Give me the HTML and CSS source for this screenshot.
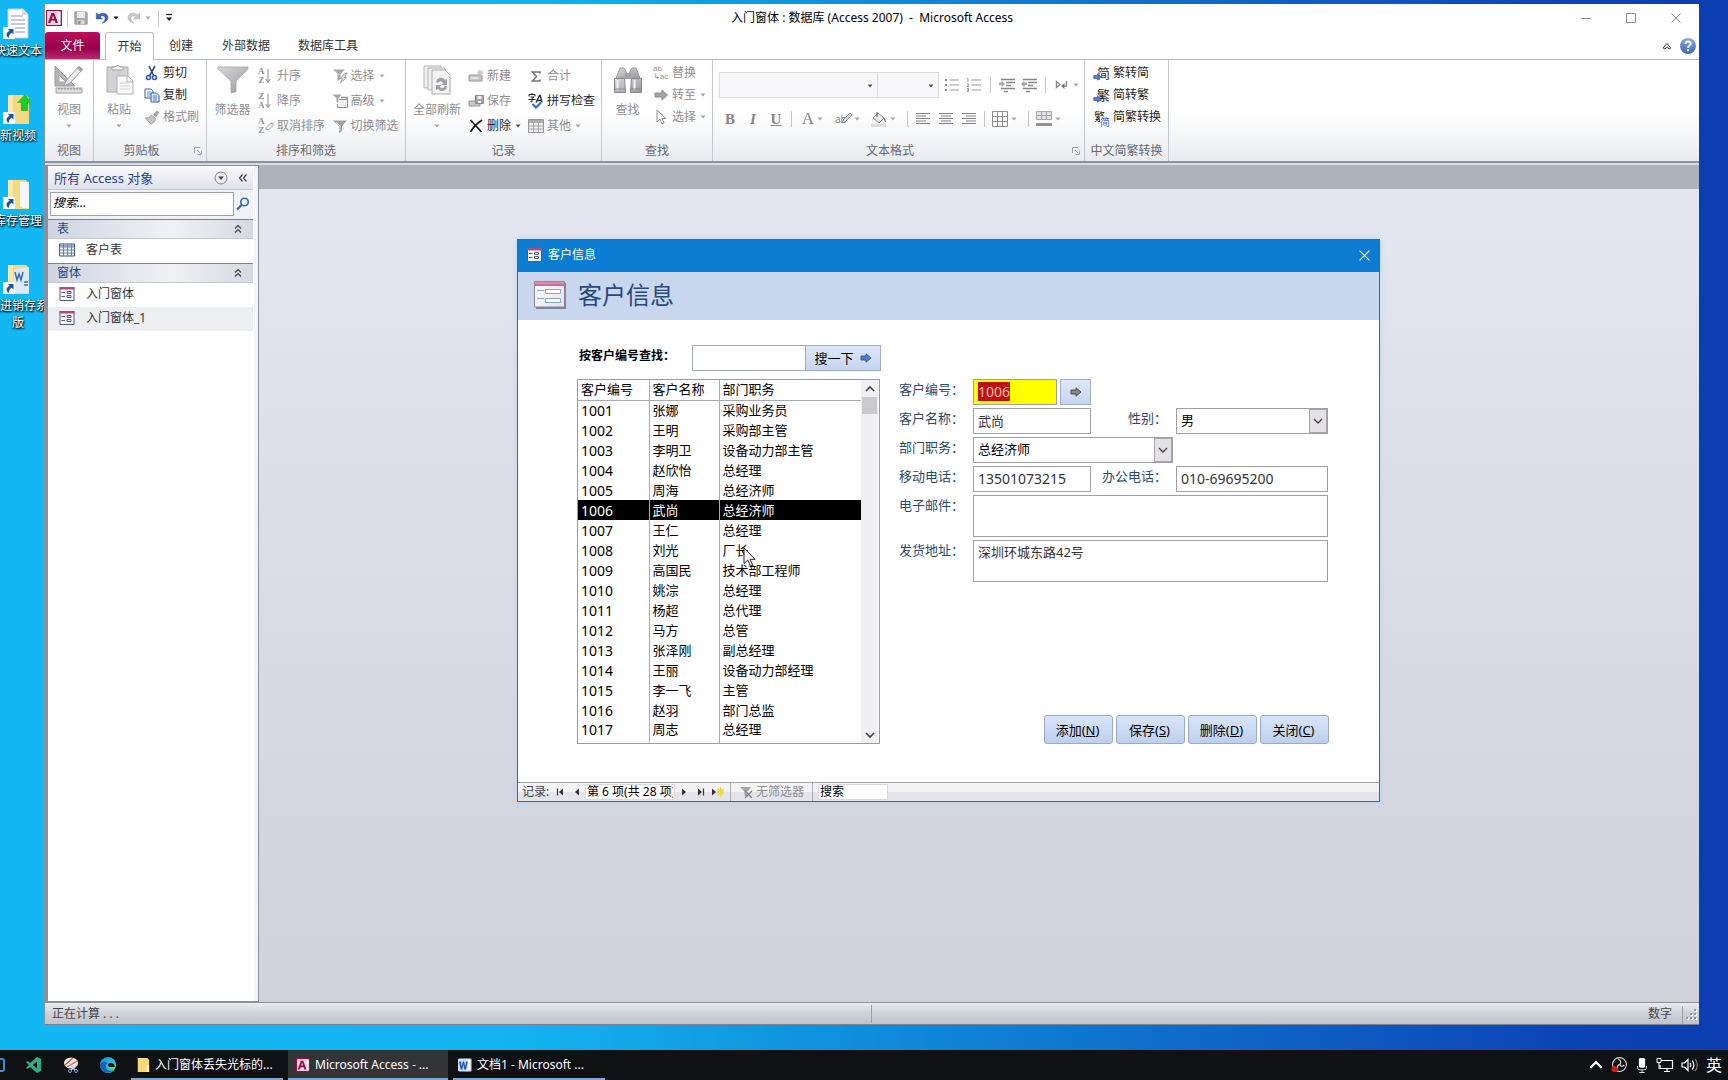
FILE: index.html
```html
<!DOCTYPE html>
<html lang="zh-CN">
<head>
<meta charset="utf-8">
<title>入门窗体 : 数据库 (Access 2007) - Microsoft Access</title>
<link rel="stylesheet" href="styles.css">
</head>
<body>
<svg class="sprite" aria-hidden="true">
  <defs>
    <linearGradient id="gGrey" x1="0" y1="0" x2="1" y2="1"><stop offset="0" stop-color="#d9d9dc"/><stop offset="1" stop-color="#98989c"/></linearGradient>
    <linearGradient id="gPaper" x1="0" y1="0" x2="1" y2="1"><stop offset="0" stop-color="#fff"/><stop offset="1" stop-color="#dfe2ee"/></linearGradient>
    <linearGradient id="gPink" x1="0" y1="0" x2="0" y2="1"><stop offset="0" stop-color="#e59abb"/><stop offset="1" stop-color="#c2638f"/></linearGradient>
    <linearGradient id="gHelp" x1="0" y1="0" x2="0" y2="1"><stop offset="0" stop-color="#86a8dc"/><stop offset="1" stop-color="#3c69b3"/></linearGradient>
    <linearGradient id="gEdge" x1="0" y1="0" x2="1" y2="1"><stop offset="0" stop-color="#1a7fd4"/><stop offset=".5" stop-color="#2bb8dd"/><stop offset="1" stop-color="#6fdd6a"/></linearGradient>
  </defs>
  <symbol id="access" viewBox="0 0 16 16"><path d="M.7.700h14.600v14.600H.7z" fill="#fff" stroke="#8e1049" stroke-width="1.300"/><path d="M1.300 1.300h11v13.400h-11z" fill="#f9cfe0"/><path d="M2 13 5.500 3h2.700L12 13H9.600l-.8-2.400H5.200L4.400 13zM5.900 8.700h2.300L7 5.200z" fill="#8e1049"/></symbol>
  <symbol id="disk" viewBox="0 0 16 16"><path d="M1 1h13l1 1v13H1z" fill="#a9a9ad" stroke="#929296"/><path d="M3.500 1h9v7h-9z" fill="#ececef"/><path d="M4 10.500h8V15H4z" fill="#dadadd"/><path d="M5 11.500h2.500V15H5z" fill="#88888c"/></symbol>
  <symbol id="undo" viewBox="0 0 16 16"><path d="M1.500 2v7h7L5.800 6.700C8 4.700 11.500 5 11.500 8.500c0 2-1 3.500-3.500 5.500 4.500-1.200 6.800-3.500 6.800-6.500C14.800 2.500 8.500 1 4 4.500z" fill="#3b62c4" stroke="#2b4c9c" stroke-width=".6"/></symbol>
  <symbol id="redo" viewBox="0 0 16 16"><path d="M14.500 2v7h-7l2.700-2.300C8 4.700 4.500 5 4.500 8.500c0 2 1 3.500 3.500 5.500C3.500 12.800 1.200 10.500 1.200 7.500 1.200 2.500 7.500 1 12 4.500z" fill="#c8c8cb" stroke="#a9a9ad" stroke-width=".6"/></symbol>
  <symbol id="down" viewBox="0 0 8 8"><path d="M1.500 2.500h5L4 5.500z" fill="currentColor"/></symbol>
  <symbol id="custom" viewBox="0 0 8 10"><path d="M1 1.500h6" stroke="#222" stroke-width="1.300"/><path d="M1 4.500h6.200L4.100 8z" fill="#222"/></symbol>
  <symbol id="view" viewBox="0 0 32 32"><path d="M2 2v20h20z" fill="#b6b6ba" stroke="#98989c"/><path d="M6 11v7h7z" fill="#fafafa" stroke="#a4a4a8"/><path d="M13 17 25 3l4 3-12 13-6 3z" fill="#ececef" stroke="#a1a1a5"/><path d="m24 4 2-2 4 3-2 3z" fill="#a2a2a6"/><path d="M3 24h26v5H3z" fill="#dededf" stroke="#a2a2a6"/><path d="M6 24v2m3-2v2m3-2v2m3-2v2m3-2v2m3-2v2m3-2v2m3-2v2" stroke="#909094"/></symbol>
  <symbol id="paste" viewBox="0 0 32 32"><path d="M4 3h21v25H4z" fill="#d2d2d5" stroke="#aaaaad"/><path d="M9 6V3h3a3 3 0 0 1 5 0h3v3z" fill="#f5f5f6" stroke="#a1a1a5"/><path d="M14 12h11l5 5v13H14z" fill="#fafafb" stroke="#b2b2b6"/><path d="M24 12v6h6" fill="none" stroke="#b2b2b6"/><path d="M17 19h9m-9 3h10m-10 3h10" stroke="#d0d0d4"/></symbol>
  <symbol id="cut" viewBox="0 0 16 16"><path d="m5 1 5 10M11 1 5.500 11" stroke="#3c4b6b" stroke-width="1.600"/><circle cx="4.500" cy="12.500" r="2" fill="none" stroke="#2f5ab0" stroke-width="1.600"/><circle cx="10.500" cy="12.500" r="2" fill="none" stroke="#2f5ab0" stroke-width="1.600"/></symbol>
  <symbol id="copy" viewBox="0 0 16 16"><path d="M1 2h6l2 2v7H1z" fill="#fff" stroke="#3a62a8"/><path d="M3 5h4M3 7h4M3 9h3" stroke="#5c8bd0"/><path d="M7 6h5.500L15 8.500V15H7z" fill="#dfeafb" stroke="#3158a3"/><path d="M9 9h4M9 11h4M9 13h4" stroke="#4b7bc8"/></symbol>
  <symbol id="brush" viewBox="0 0 16 16"><path d="m9 6 4-4.500 2.300 1.800L12 8z" fill="#a0a0a4"/><path d="M1 9c3 .5 5-1 6-3l5 3.500c-1 3-3 5-5 5.500z" fill="#c3c3c6" stroke="#9a9a9e" stroke-width=".7"/></symbol>
  <symbol id="funnel" viewBox="0 0 32 32"><path d="M1 3h30v2L19 17v10.500l-5 1.500V17L1 5z" fill="url(#gGrey)" stroke="#a4a4a8" stroke-width=".8"/></symbol>
  <symbol id="funnelS" viewBox="0 0 16 16"><path d="M1 2.500h14L10 8v5l-3 2V8z" fill="#a0a0a4"/><path d="m4 4 4 4v5" stroke="#e2e2e4" fill="none"/></symbol>
  <symbol id="funnelB" viewBox="0 0 16 16"><path d="M1 1.500h12L8.500 6v5L5.500 13V6z" fill="#a4a4a8"/><path d="m3.500 3 4 4" stroke="#e2e2e4" fill="none"/><path d="m12 6 3-1-2.500 4.500h2L8.500 15l2-4.500h-2z" fill="#e0e0e3" stroke="#929296" stroke-width=".8"/></symbol>
  <symbol id="funnelA" viewBox="0 0 16 16"><path d="M.500 1.500h9L6.500 5v5l-2-1V5z" fill="#a4a4a8"/><path d="M7 6.500h8.500v8H5.500V11" fill="#f1f1f3" stroke="#929296"/><path d="M9 4.500h6.500v2" fill="none" stroke="#929296" stroke-width="1.500"/></symbol>
  <symbol id="sortbar" viewBox="0 0 6 16"><path d="M3 1v13M.8 11 3 14.500 5.200 11" stroke="#8b8b8f" fill="none"/></symbol>
  <symbol id="eraser" viewBox="0 0 10 10"><path d="m1 7 5-5h3v2.500L4.500 9H1z" fill="#f0f0f1" stroke="#98989c"/></symbol>
  <symbol id="refresh" viewBox="0 0 32 32"><path d="M3 2h17v22H3z" fill="#f1f1f2" stroke="#b4b4b8"/><path d="M7 4h17v22H7z" fill="#f1f1f2" stroke="#b4b4b8"/><path d="M11 6h13l5 5v19H11z" fill="#f3f3f4" stroke="#a9a9ad"/><path d="M15 18a5 5 0 0 1 9-2l2-1v6h-6l2-2c-1-2-4-2-5 0zM26 22a5 5 0 0 1-9 3l-2 1v-5h5l-1 2c2 2 4 1 5-1z" fill="#a2a2a6"/></symbol>
  <symbol id="rec" viewBox="0 0 16 16"><path d="M1 7h13v6H1z" fill="#c6c6c9" stroke="#98989c"/><path d="M3 10h7" stroke="#fff"/><path d="m12 1 .8 2 2.200-.8L14.200 4l1.500 1.200-2 .5L13.500 8 12 6.500 10.300 8V5.700L8.500 5l1.800-1L9.500 2l2 .8z" fill="#c9c9cc"/></symbol>
  <symbol id="recsave" viewBox="0 0 16 16"><path d="M1 8h11v5H1z" fill="#c6c6c9" stroke="#98989c"/><path d="M7.500 2.500h8v8h-8z" fill="#a5a5a9" stroke="#8b8b8f"/><path d="M9.500 3h4v3h-4zM10 8h3v2h-3z" fill="#eee"/></symbol>
  <symbol id="cross" viewBox="0 0 16 16"><path d="m2.500 2 11 12M14 2C9 5.500 5 9.500 2.500 14" stroke="#1c1c1c" stroke-width="1.800" fill="none"/></symbol>
  <symbol id="sigma" viewBox="0 0 16 16"><path d="M12 5.500V4H4.500l4 4.500-4 4.500H12v-1.500" fill="none" stroke="#77777b" stroke-width="1.600"/></symbol>
  <symbol id="spell" viewBox="0 0 16 16"><path d="M4 0v1.500M1 3.500v-2h6v2M2.500 4h3.500L4 5.500M.500 6.500h7M4 5.500V9l-1.500-.5" fill="none" stroke="#222"/><path d="m8 9.500 3.500-7h.7L14 9.500M9.500 7.500h4" fill="none" stroke="#222" stroke-width="1.300"/><path d="m4.500 11 3.500 3.500 5-5" fill="none" stroke="#3d6fd0" stroke-width="2.300"/></symbol>
  <symbol id="sheet" viewBox="0 0 16 16"><path d="M.5 1.500h15v13H.5z" fill="#efeff0" stroke="#949498"/><path d="M1 2h14v3H1z" fill="#acacb0"/><path d="M.5 8h15m-15 3h15M5.500 5v9.500m5-9.500v9.500" stroke="#a2a2a6"/></symbol>
  <symbol id="find" viewBox="0 0 32 32"><path d="M8 4h4l2 3 1 7H4zM20 4h4l4 10H17l1-7z" fill="url(#gGrey)" stroke="#9b9b9f"/><path d="M13 9h6v6h-6z" fill="#a2a2a6"/><path d="M2.500 14.500h10l1 14h-11zM19.500 14.500h10v14h-11z" fill="url(#gGrey)" stroke="#8b8b8f"/><path d="M5.500 16v10M22.500 16v10" stroke="#f4f4f5" stroke-width="2"/><path d="M2 25h12M18 25h12" stroke="#8b8b8f"/></symbol>
  <symbol id="goto" viewBox="0 0 16 16"><path d="M2 6h7V3l5.500 5L9 13v-3H2z" fill="#a4a4a8" stroke="#8b8b8f"/></symbol>
  <symbol id="ptr" viewBox="0 0 16 16"><path d="M4 1v12l3-3 2 5 2-1-2-4.500h4z" fill="#fafafa" stroke="#909094"/></symbol>
  <symbol id="bullets" viewBox="0 0 16 16"><path d="M5.500 3H15M5.500 8H15m-9.500 5H15" stroke="#98989c" stroke-width="1.200"/><path d="M1 2h2v2H1zm0 5h2v2H1zm0 5h2v2H1z" fill="#8b8b8f"/></symbol>
  <symbol id="numbers" viewBox="0 0 16 16"><path d="M5.500 3H15M5.500 8H15m-9.500 5H15" stroke="#98989c" stroke-width="1.200"/><path d="M1 1.500h1V5M1 7h1.500v1L1 9.500h2M1 11.500h1.500v3H1m0-1.500h1.500" stroke="#8b8b8f" fill="none" stroke-width=".9"/></symbol>
  <symbol id="indent" viewBox="0 0 16 16"><path d="M2 2.500h14M7 5.500h9M7 8.500h5M2 11.500h14M5 14.500h4" stroke="#86868a" stroke-width="1.500"/><path d="M0 5.500h2.500v-2L6 7 2.500 10V8H0z" fill="#a6a6aa"/></symbol>
  <symbol id="outdent" viewBox="0 0 16 16"><path d="M2 2.500h14M7 5.500h9M7 8.500h5M2 11.500h14M5 14.500h4" stroke="#86868a" stroke-width="1.500"/><path d="M6 5.500H3.500v-2L0 7l3.500 3.500V8H6z" fill="#a6a6aa"/></symbol>
  <symbol id="rtl" viewBox="0 0 16 16"><path d="M2.500 4.500v6l3.500-3zM12.500 4v5H9" fill="none" stroke="#8b8b8f" stroke-width="1.400"/><path d="m7 9 3.500-3v6z" fill="#77777b"/></symbol>
  <symbol id="marker" viewBox="0 0 12 16"><path d="m2 9 7-7 2 2-7 7-3 1z" fill="#d5d5d8" stroke="#909094"/></symbol>
  <symbol id="bucket" viewBox="0 0 16 16"><path d="m2 7 5-5 6 5-5 5z" fill="#ececee" stroke="#909094"/><path d="M6 1v5m7 1 1.500 4" stroke="#808084" fill="none" stroke-width="1.400"/><path d="M0 12.500h15V16H0z" fill="#dededf"/></symbol>
  <symbol id="aleft" viewBox="0 0 16 16"><path d="M1 2.500h14M1 5h10M1 7.500h14M1 10h10M1 12.500h14" stroke="#808084"/></symbol>
  <symbol id="acenter" viewBox="0 0 16 16"><path d="M1 2.500h14M3 5h10M1 7.500h14M3 10h10M1 12.500h14" stroke="#808084"/></symbol>
  <symbol id="aright" viewBox="0 0 16 16"><path d="M1 2.500h14M5 5h10M1 7.500h14M5 10h10M1 12.500h14" stroke="#808084"/></symbol>
  <symbol id="grid" viewBox="0 0 16 16"><path d="M.5.500h15v15H.5zM5.500.500v15m5-15v15M.5 5.500h15m-15 5h15" fill="#fff" stroke="#8b8b8f"/></symbol>
  <symbol id="altrow" viewBox="0 0 16 16"><path d="M.5.500h15v8H.5zM5.500.500v8m5-8v8M.5 4.500h15" fill="#e2e2e4" stroke="#a6a6aa"/><path d="M0 12h16v3H0z" fill="#939397"/></symbol>
  <symbol id="bluearrow" viewBox="0 0 12 10"><path d="M1 3h5V.8L11 5 6 9.200V7H1z" fill="#4e7fdc" stroke="#28478d" stroke-width=".8"/></symbol>
  <symbol id="greyarrow" viewBox="0 0 12 10"><path d="M1 3h5V.8L11 5 6 9.200V7H1z" fill="#86888f" stroke="#404248" stroke-width=".9"/></symbol>
  <symbol id="launcher" viewBox="0 0 8 8"><path d="M.5 6V.500H6M3 3l3.500 3.500M7.500 3.500v4h-4" fill="none" stroke="#a6a6aa"/></symbol>
  <symbol id="table" viewBox="0 0 16 13"><path d="M.5.500h15v12H.5z" fill="#f2f6fd" stroke="#3d5780"/><path d="M1 1h14v2H1z" fill="#8fa6ca"/><path d="M0 3.500h16M0 6.500h16M0 9.500h16M4.500 0v13m4-13v13m4-13v13" stroke="#6983ad"/></symbol>
  <symbol id="form" viewBox="0 0 15 14"><path d="M.5.500h14v13H.5z" fill="#f6f7fd" stroke="#545488"/><path d="M0 0h15v2.500H0z" fill="#b54a72"/><path d="M2 5.500h3.500M2 9.500h3.500" stroke="#545488"/><path d="M7.500 4.500h4v2h-4zm0 4h4v2h-4z" fill="#fff" stroke="#545488"/></symbol>
  <symbol id="formbig" viewBox="0 0 32 28"><path d="M2 2h30v26H2z" fill="#7a8798"/><path d="M.5.500h30v25.500H.5z" fill="url(#gPaper)" stroke="#8f8398"/><path d="M1 1h29v4H1z" fill="url(#gPink)"/><path d="M3 9.500h7M3 17.500h7" stroke="#8da5c4"/><path d="M11.500 8.500h15v4h-15zm0 9h15v4h-15z" fill="#fff" stroke="#8da5c4"/></symbol>
  <symbol id="lens" viewBox="0 0 14 14"><circle cx="8.500" cy="5" r="3.800" fill="#e9f3ff" stroke="#3968a8" stroke-width="1.600"/><path d="M5.500 8 1.200 12.500" stroke="#3968a8" stroke-width="2.200"/></symbol>
  <symbol id="circledown" viewBox="0 0 14 14"><circle cx="7" cy="7" r="6" fill="#eceef2" stroke="#82868e"/><path d="M4 5.500h6L7 9z" fill="#44484f"/></symbol>
  <symbol id="dblleft" viewBox="0 0 10 10"><path d="M4.500 1.500 1.500 5l3 3.500M8.500 1.500 5.500 5l3 3.500" fill="none" stroke="#3c4048" stroke-width="1.200"/></symbol>
  <symbol id="dblup" viewBox="0 0 10 10"><path d="M2 4.500 5 1.500l3 3M2 8.500l3-3 3 3" fill="none" stroke="#3c4048" stroke-width="1.200"/></symbol>
  <symbol id="chevup" viewBox="0 0 10 8"><path d="M1.200 6 5 1.500 8.800 6 7 7 5 4.800 3 7z" fill="#fff" stroke="#333" stroke-width="1"/></symbol>
  <symbol id="min" viewBox="0 0 10 10"><path d="M0 5.500h10" stroke="#8a8a8a"/></symbol>
  <symbol id="max" viewBox="0 0 10 10"><path d="M.5.500h9v9h-9z" fill="none" stroke="#8a8a8a"/></symbol>
  <symbol id="x" viewBox="0 0 10 10"><path d="m.5.500 9 9m0-9-9 9" stroke="currentColor"/></symbol>
  <symbol id="chevD" viewBox="0 0 10 8"><path d="M1 2l4 4 4-4" fill="none" stroke="currentColor" stroke-width="1.300"/></symbol>
  <symbol id="chevU" viewBox="0 0 10 8"><path d="M1 6l4-4 4 4" fill="none" stroke="currentColor" stroke-width="1.600"/></symbol>
  <symbol id="first" viewBox="0 0 8 8"><path d="M1.500.500v7" stroke="#333" stroke-width="1.200"/><path d="M7 .5v7L3 4z" fill="#333"/></symbol>
  <symbol id="prev" viewBox="0 0 8 8"><path d="M6 .5v7L2 4z" fill="#333"/></symbol>
  <symbol id="next" viewBox="0 0 8 8"><path d="M2 .5v7L6 4z" fill="#333"/></symbol>
  <symbol id="last" viewBox="0 0 8 8"><path d="M6.500.500v7" stroke="#333" stroke-width="1.200"/><path d="M1 .5v7L5 4z" fill="#333"/></symbol>
  <symbol id="newrec" viewBox="0 0 14 10"><path d="M1 1.500v7L5 5z" fill="#333"/><path d="M9.500 0v10M5.500 5h8M6.500 2l6 6m0-6-6 6" stroke="#f2d64a" stroke-width="1.500"/></symbol>
  <symbol id="nofilter" viewBox="0 0 14 14"><path d="M1 2h11L8.500 6.500V12l-3-1.500v-4z" fill="#a4a4a8"/><path d="m6 6 7 7m0-7-7 7" stroke="#808084" stroke-width="1.300"/></symbol>
  <symbol id="doc" viewBox="0 0 32 32"><path d="M6 1h15l5 5v24H6z" fill="#fdfdfe" stroke="#c4ccd4"/><path d="M20 1v6h6" fill="#d6dce2"/><path d="M9 8h12M9 12h14M9 16h14M9 20h14M9 24h14" stroke="#8f9aa8"/></symbol>
  <symbol id="folder" viewBox="0 0 32 32"><path d="M6 2h18l3 3v26H6z" fill="#f3d982"/><path d="M6 2h5v29H6z" fill="#fbe8a8"/></symbol>
  <symbol id="shortcut" viewBox="0 0 12 12"><path d="M0 0h12v12H0z" fill="#fafcff"/><path d="M5 2h5.500v5.500L8.700 5.700C6.500 7 5.800 8.500 5.800 11 2.500 9 3 5.500 6.700 3.700z" fill="#234f9b"/></symbol>
  <symbol id="vs" viewBox="0 0 16 16"><path d="M11 0 15 2v12l-4 2-7-6-2.500 2L0 11l3-3-3-3 1.500-1L4 6zM11 4.500 6.800 8l4.200 3.500z" fill="#2fae86"/></symbol>
  <symbol id="snip" viewBox="0 0 16 16"><ellipse cx="8" cy="6" rx="7" ry="5.500" fill="#f8e8e4"/><path d="M2 8 10 1M4 10l10-6" stroke="#d35851" stroke-width="1.300"/><path d="m8 8 4 5m2-5-6 5" stroke="#ccd3e5" stroke-width="1.500"/><circle cx="13" cy="14" r="1.500" fill="none" stroke="#7fa3dd"/><circle cx="7" cy="14" r="1.500" fill="none" stroke="#7fa3dd"/></symbol>
  <symbol id="edge" viewBox="0 0 16 16"><circle cx="8" cy="8" r="8" fill="url(#gEdge)"/><path d="M0 8c1-4 5-4 8-2-3 1-3 5 0 7 2 1 5 1 6-1-2 4-8 5-11 2C1 12 0 10 0 8z" fill="#1463b5"/><path d="M9 6.500c-1.500 1-1 3.500 1 3.500h4.500c.5-2-1.500-5-5.500-3.500z" fill="#101116"/></symbol>
  <symbol id="word" viewBox="0 0 16 16"><path d="M1 1h14v14H1z" fill="#fff" stroke="#8fb2dd"/><path d="M0 1.500 11 .8v14.400L0 14.500z" fill="#cfe0f5"/><path d="M1 4h2.200l1 6 1.200-6h1.600l1.200 6 1-6h2L9.300 13H7.200L6.200 7.500 5 13H3z" fill="#1f5aa8"/></symbol>
  <symbol id="obs" viewBox="0 0 18 18"><circle cx="9.500" cy="8.500" r="7.800" fill="#111" stroke="#d5d5d5" stroke-width="1.200"/><path d="M8 2.500c3 1 4 3 2 6M15 9c-2 2-4 2-5-.5M7 13.500c0-3 1-5 3-5" fill="none" stroke="#d5d5d5" stroke-width="1.400"/><circle cx="4" cy="13.500" r="3.500" fill="#d8141c"/></symbol>
  <symbol id="mic" viewBox="0 0 12 18"><rect x="2.500" y="1" width="7" height="11" rx="1.500" fill="#fff"/><path d="M1 10v2c0 2 1 2.500 5 2.500s5-.5 5-2.500v-2M6 15v2M3 17.500h6" fill="none" stroke="#fff"/></symbol>
  <symbol id="net" viewBox="0 0 18 16"><path d="M5 3.500h11.500v8H4V8M8 14.500h6M11 12v2.500" fill="none" stroke="#fff" stroke-width="1.200"/><path d="M1 1.500h4v4H1zM3 6v6" fill="none" stroke="#fff"/></symbol>
  <symbol id="sound" viewBox="0 0 18 16"><path d="M1 6h2.500L7 2.500v11L3.500 10H1z" fill="none" stroke="#fff" stroke-width="1.200"/><path d="M9 6c1 1 1 3 0 4m2-6.500c2.500 2.500 2.500 6.500 0 9" fill="none" stroke="#fff" stroke-width="1.200"/><path d="M14 2c3 3 3 9 0 12" fill="none" stroke="#777" stroke-width="1.200"/></symbol>
  <symbol id="cursor" viewBox="0 0 13 20"><path d="M1 1v15.500l3.700-3.500 2.600 6 2.300-1-2.500-5.700H12z" fill="#fff" stroke="#222"/></symbol>
  <symbol id="grip" viewBox="0 0 12 12"><path d="M9 1h2v2H9zM9 5h2v2H9zM5 5h2v2H5zM9 9h2v2H9zM5 9h2v2H5zM1 9h2v2H1z" fill="#fff"/><path d="M8 0h2v2H8zM8 4h2v2H8zM4 4h2v2H4zM8 8h2v2H8zM4 8h2v2H4zM0 8h2v2H0z" fill="#8f959e"/></symbol>
</svg>

<main class="desktop">
  <div class="shortcuts">
    <a class="shortcut" href="#"><span class="pic"><svg><use href="#doc"/></svg><svg class="mark"><use href="#shortcut"/></svg></span>快速文本</a>
    <a class="shortcut" href="#"><span class="pic"><svg viewBox="0 0 32 32"><use href="#folder"/><path d="M23 1l7 9h-4v8h-7v-8h-4z" fill="#25c62c"/></svg><svg class="mark"><use href="#shortcut"/></svg></span>新视频</a>
    <a class="shortcut" href="#"><span class="pic"><svg viewBox="0 0 32 32"><use href="#folder"/><path d="M18 4h9v26h-6l-3-2z" fill="#f4f6f8"/></svg><svg class="mark"><use href="#shortcut"/></svg></span>库存管理</a>
    <a class="shortcut long" href="#"><span class="pic"><svg viewBox="0 0 32 32"><use href="#folder"/><path d="M12 6l15-2v26H12z" fill="#dfe9f5"/><path d="M13 9l2 8 2-6 2 6 2-8m1 10h4m-4 3h4" fill="none" stroke="#3c6cb4" stroke-width="1.500"/></svg><svg class="mark"><use href="#shortcut"/></svg></span>找进销存系<br>版</a>
  </div>

  <section class="window">
    <header class="titlebar">
      <div class="quick">
        <svg class="i16"><use href="#access"/></svg><i class="vbar"></i>
        <button class="icon" aria-label="保存"><svg class="i14"><use href="#disk"/></svg></button>
        <button class="icon" aria-label="撤消"><svg class="i14"><use href="#undo"/></svg><svg class="i8 dark"><use href="#down"/></svg></button>
        <button class="icon" aria-label="恢复"><svg class="i14"><use href="#redo"/></svg><svg class="i8"><use href="#down"/></svg></button>
        <i class="vbar"></i><button class="icon" aria-label="自定义"><svg class="i8 tall"><use href="#custom"/></svg></button>
      </div>
      <h1>入门窗体 : 数据库 (Access 2007)&nbsp; -&nbsp; Microsoft Access</h1>
      <div class="winbtns">
        <button class="icon" aria-label="最小化"><svg><use href="#min"/></svg></button>
        <button class="icon" aria-label="最大化"><svg><use href="#max"/></svg></button>
        <button class="icon" aria-label="关闭"><svg><use href="#x"/></svg></button>
      </div>
    </header>

    <nav class="tabs">
      <button class="tab file">文件</button>
      <button class="tab current">开始</button>
      <button class="tab">创建</button>
      <button class="tab">外部数据</button>
      <button class="tab">数据库工具</button>
      <span class="help"><button class="icon" aria-label="折叠功能区"><svg class="chev"><use href="#chevup"/></svg></button>
      <button class="icon" aria-label="帮助"><svg class="i16" viewBox="0 0 16 16"><circle cx="8" cy="8" r="8" fill="url(#gHelp)"/><path d="M5.500 6c0-3.300 5.200-3.200 5.200-.2C10.700 7.800 8 7.700 8 9.800M8 11.200v2" fill="none" stroke="#fff" stroke-width="2"/></svg></button></span>
    </nav>

    <div class="ribbon">
      <section class="group g-view">
        <div class="tools">
          <button class="big" disabled><svg><use href="#view"/></svg>视图<svg class="i8"><use href="#down"/></svg></button>
        </div>
        <h2>视图</h2>
      </section>
      <section class="group g-clip">
        <div class="tools">
          <button class="big" disabled><svg><use href="#paste"/></svg>粘贴<svg class="i8"><use href="#down"/></svg></button>
          <div class="stack">
            <button class="small"><svg><use href="#cut"/></svg>剪切</button>
            <button class="small"><svg><use href="#copy"/></svg>复制</button>
            <button class="small" disabled><svg><use href="#brush"/></svg>格式刷</button>
          </div>
        </div>
        <h2 class="more">剪贴板<svg class="launch"><use href="#launcher"/></svg></h2>
      </section>
      <section class="group g-sort">
        <div class="tools">
          <button class="big" disabled><svg><use href="#funnel"/></svg>筛选器</button>
          <div class="stack loose">
            <button class="small" disabled><span class="az"><b>A<br>Z</b><svg><use href="#sortbar"/></svg></span>升序</button>
            <button class="small" disabled><span class="az"><b>Z<br>A</b><svg><use href="#sortbar"/></svg></span>降序</button>
            <button class="small" disabled><span class="az"><b>A<br>Z</b><svg class="rub"><use href="#eraser"/></svg></span>取消排序</button>
          </div>
          <div class="stack loose">
            <button class="small" disabled><svg><use href="#funnelB"/></svg>选择<svg class="i8"><use href="#down"/></svg></button>
            <button class="small" disabled><svg><use href="#funnelA"/></svg>高级<svg class="i8"><use href="#down"/></svg></button>
            <button class="small" disabled><svg><use href="#funnelS"/></svg>切换筛选</button>
          </div>
        </div>
        <h2>排序和筛选</h2>
      </section>
      <section class="group g-rec">
        <div class="tools">
          <button class="big" disabled><svg><use href="#refresh"/></svg>全部刷新<svg class="i8"><use href="#down"/></svg></button>
          <div class="stack loose">
            <button class="small" disabled><svg><use href="#rec"/></svg>新建</button>
            <button class="small" disabled><svg><use href="#recsave"/></svg>保存</button>
            <button class="small"><svg><use href="#cross"/></svg>删除<svg class="i8 mid"><use href="#down"/></svg></button>
          </div>
          <div class="stack loose">
            <button class="small" disabled><svg><use href="#sigma"/></svg>合计</button>
            <button class="small"><svg><use href="#spell"/></svg>拼写检查</button>
            <button class="small" disabled><svg><use href="#sheet"/></svg>其他<svg class="i8"><use href="#down"/></svg></button>
          </div>
        </div>
        <h2>记录</h2>
      </section>
      <section class="group g-find">
        <div class="tools">
          <button class="big" disabled><svg><use href="#find"/></svg>查找</button>
          <div class="stack">
            <button class="small" disabled><span class="abac">ab<br>↳ac</span>替换</button>
            <button class="small" disabled><svg><use href="#goto"/></svg>转至<svg class="i8"><use href="#down"/></svg></button>
            <button class="small" disabled><svg><use href="#ptr"/></svg>选择<svg class="i8"><use href="#down"/></svg></button>
          </div>
        </div>
        <h2>查找</h2>
      </section>
      <section class="group g-text">
        <div class="format">
          <div class="line">
            <span class="combo font"><select disabled aria-label="字体"><option></option></select><svg class="i8 mid"><use href="#down"/></svg></span>
            <span class="combo size"><select disabled aria-label="字号"><option></option></select><svg class="i8 mid"><use href="#down"/></svg></span>
            <button class="fmt" disabled aria-label="项目符号"><svg><use href="#bullets"/></svg></button>
            <button class="fmt" disabled aria-label="编号"><svg><use href="#numbers"/></svg></button>
            <i class="vbar"></i>
            <button class="fmt" disabled aria-label="增加缩进"><svg><use href="#indent"/></svg></button>
            <button class="fmt" disabled aria-label="减少缩进"><svg><use href="#outdent"/></svg></button>
            <i class="vbar"></i>
            <button class="fmt" disabled aria-label="文字方向"><svg><use href="#rtl"/></svg><svg class="i8"><use href="#down"/></svg></button>
          </div>
          <div class="line second">
            <button class="fmt letter" disabled><b>B</b></button>
            <button class="fmt letter" disabled><b><i>I</i></b></button>
            <button class="fmt letter" disabled><b><u>U</u></b></button>
            <i class="vbar"></i>
            <button class="fmt letter wide" disabled>A<svg class="i8"><use href="#down"/></svg></button>
            <button class="fmt wide hl" disabled><span>ab</span><svg><use href="#marker"/></svg><svg class="i8"><use href="#down"/></svg></button>
            <button class="fmt wide" disabled aria-label="填充"><svg><use href="#bucket"/></svg><svg class="i8"><use href="#down"/></svg></button>
            <i class="vbar"></i>
            <button class="fmt" disabled aria-label="左对齐"><svg><use href="#aleft"/></svg></button>
            <button class="fmt" disabled aria-label="居中"><svg><use href="#acenter"/></svg></button>
            <button class="fmt" disabled aria-label="右对齐"><svg><use href="#aright"/></svg></button>
            <i class="vbar"></i>
            <button class="fmt wide" disabled aria-label="网格线"><svg><use href="#grid"/></svg><svg class="i8"><use href="#down"/></svg></button>
            <i class="vbar"></i>
            <button class="fmt wide" disabled aria-label="备用行颜色"><svg><use href="#altrow"/></svg><svg class="i8"><use href="#down"/></svg></button>
          </div>
        </div>
        <h2 class="more">文本格式<svg class="launch"><use href="#launcher"/></svg></h2>
      </section>
      <section class="group g-cn">
        <div class="tools">
          <div class="stack">
            <button class="small"><span class="cn">简<svg><use href="#bluearrow"/></svg></span>繁转简</button>
            <button class="small"><span class="cn">繁<svg><use href="#bluearrow"/></svg></span>简转繁</button>
            <button class="small"><span class="cn pair">繁<em>简</em></span>简繁转换</button>
          </div>
        </div>
        <h2>中文简繁转换</h2>
      </section>
    </div>

    <div class="work">
      <aside class="pane">
        <div class="pane-head"><h2>所有 Access 对象</h2><svg class="i14"><use href="#circledown"/></svg><svg class="i10"><use href="#dblleft"/></svg></div>
        <div class="pane-search"><input type="text" placeholder="搜索..." aria-label="搜索"><button class="icon" aria-label="搜索"><svg class="i14"><use href="#lens"/></svg></button></div>
        <h3>表<svg class="i10"><use href="#dblup"/></svg></h3>
        <a href="#" class="obj"><svg><use href="#table"/></svg>客户表</a>
        <h3>窗体<svg class="i10"><use href="#dblup"/></svg></h3>
        <a href="#" class="obj"><svg><use href="#form"/></svg>入门窗体</a>
        <a href="#" class="obj hover"><svg><use href="#form"/></svg>入门窗体_1</a>
      </aside>
      <div class="canvas">
        <section class="dialog">
          <header class="dlg-title"><svg><use href="#form"/></svg>客户信息<button class="icon close" aria-label="关闭"><svg><use href="#x"/></svg></button></header>
          <div class="dlg-head"><svg><use href="#formbig"/></svg><h2>客户信息</h2></div>
          <div class="dlg-body">
            <div class="left">
              <div class="lookup">
                <label for="q">按客户编号查找：</label><input id="q" type="text"><button class="go">搜一下<svg><use href="#bluearrow"/></svg></button>
              </div>
              <div class="listbox">
                <table>
                  <thead><tr><th>客户编号</th><th>客户名称</th><th>部门职务</th></tr></thead>
                  <tbody>
                    <tr><td>1001</td><td>张娜</td><td>采购业务员</td></tr>
                    <tr><td>1002</td><td>王明</td><td>采购部主管</td></tr>
                    <tr><td>1003</td><td>李明卫</td><td>设备动力部主管</td></tr>
                    <tr><td>1004</td><td>赵欣怡</td><td>总经理</td></tr>
                    <tr><td>1005</td><td>周海</td><td>总经济师</td></tr>
                    <tr class="sel"><td>1006</td><td>武尚</td><td>总经济师</td></tr>
                    <tr><td>1007</td><td>王仁</td><td>总经理</td></tr>
                    <tr><td>1008</td><td>刘光</td><td>厂长</td></tr>
                    <tr><td>1009</td><td>高国民</td><td>技术部工程师</td></tr>
                    <tr><td>1010</td><td>姚淙</td><td>总经理</td></tr>
                    <tr><td>1011</td><td>杨超</td><td>总代理</td></tr>
                    <tr><td>1012</td><td>马方</td><td>总管</td></tr>
                    <tr><td>1013</td><td>张泽刚</td><td>副总经理</td></tr>
                    <tr><td>1014</td><td>王丽</td><td>设备动力部经理</td></tr>
                    <tr><td>1015</td><td>李一飞</td><td>主管</td></tr>
                    <tr><td>1016</td><td>赵羽</td><td>部门总监</td></tr>
                    <tr><td>1017</td><td>周志</td><td>总经理</td></tr>
                  </tbody>
                </table>
                <div class="scroll"><svg><use href="#chevU"/></svg><i class="thumb"></i><svg><use href="#chevU" transform="rotate(180 5 4)"/></svg></div>
                <svg class="mouse"><use href="#cursor"/></svg>
              </div>
            </div>
            <div class="right">
              <form class="fields">
                <label for="id">客户编号：</label>
                <div class="idrow"><input id="id" class="digits" type="text" value="1006"><button type="button" class="go" aria-label="转到"><svg><use href="#greyarrow"/></svg></button></div>
                <label for="name">客户名称：</label>
                <input id="name" type="text" value="武尚">
                <label for="sex" class="second">性别：</label>
                <div class="drop"><select id="sex"><option>男</option><option>女</option></select><span><svg><use href="#chevD"/></svg></span></div>
                <label for="dept">部门职务：</label>
                <div class="drop dept"><select id="dept"><option>总经济师</option><option>总经理</option></select><span><svg><use href="#chevD"/></svg></span></div>
                <label for="mobile">移动电话：</label>
                <input id="mobile" class="digits" type="text" value="13501073215">
                <label for="tel" class="second">办公电话：</label>
                <input id="tel" class="digits" type="text" value="010-69695200">
                <label for="mail">电子邮件：</label>
                <textarea id="mail"></textarea>
                <label for="addr">发货地址：</label>
                <textarea id="addr">深圳环城东路42号</textarea>
              </form>
              <div class="actions">
                <button>添加(<u>N</u>)</button><button>保存(<u>S</u>)</button><button>删除(<u>D</u>)</button><button>关闭(<u>C</u>)</button>
              </div>
            </div>
          </div>
          <footer class="recnav">
            <label for="pos">记录:</label>
            <button class="icon" aria-label="第一条"><svg><use href="#first"/></svg></button>
            <button class="icon" aria-label="上一条"><svg><use href="#prev"/></svg></button>
            <input id="pos" type="text" value="第 6 项(共 28 项)">
            <button class="icon" aria-label="下一条"><svg><use href="#next"/></svg></button>
            <button class="icon" aria-label="最后一条"><svg><use href="#last"/></svg></button>
            <button class="icon new" aria-label="新记录"><svg><use href="#newrec"/></svg></button>
            <button class="filter" disabled><svg><use href="#nofilter"/></svg>无筛选器</button>
            <input class="find" type="text" value="搜索" aria-label="搜索记录">
          </footer>
        </section>
      </div>
    </div>

    <footer class="status"><span>正在计算 . . .</span><i></i><span class="num">数字</span><svg><use href="#grip"/></svg></footer>
  </section>
</main>

<footer class="taskbar">
  <span class="pins">
    <button class="icon half" aria-label="应用"></button>
    <button class="icon" aria-label="Visual Studio"><svg><use href="#vs"/></svg></button>
    <button class="icon" aria-label="截图"><svg><use href="#snip"/></svg></button>
    <button class="icon" aria-label="Edge"><svg><use href="#edge"/></svg></button>
  </span>
  <button class="task"><svg viewBox="0 0 16 16"><path d="M2 0h11l2 2v14H2z" fill="#f7d979"/><path d="M12 8h3v8h-3z" fill="#fff0b5"/></svg>入门窗体丢失光标的...</button>
  <button class="task active"><svg><use href="#access"/></svg>Microsoft Access - ...</button>
  <button class="task"><svg><use href="#word"/></svg>文档1 - Microsoft ...</button>
  <span class="tray">
    <svg class="up"><use href="#chevU"/></svg><svg class="w18"><use href="#obs"/></svg><svg class="w12"><use href="#mic"/></svg><svg class="w18"><use href="#net"/></svg><svg class="w18"><use href="#sound"/></svg><span>英</span>
  </span>
</footer>
<script src="script.js"></script>
</body>
</html>
```

FILE: styles.css
```css
* { box-sizing: border-box; }
html, body { height: 100%; }
body {
  margin: 0;
  display: flex;
  flex-direction: column;
  overflow: hidden;
  font: 12px/18px "Noto Sans", "Noto Sans CJK SC", sans-serif;
  color: #222;
}
h1, h2, h3 { margin: 0; font-size: 12px; font-weight: 400; }
button, input, select, textarea { font: inherit; color: inherit; margin: 0; border-radius: 0; }
button { border: 0; background: none; padding: 0; white-space: nowrap; }
svg { display: block; flex: none; color: #a6a6aa; }
a { color: inherit; text-decoration: none; }
.sprite { position: absolute; width: 0; height: 0; }
.icon { display: flex; align-items: center; }
.i16 { width: 16px; height: 16px; }
.i14 { width: 14px; height: 14px; }
.i10 { width: 10px; height: 10px; }
.i8 { width: 8px; height: 8px; }
.tall { height: 10px; }
.dark { color: #111; }
.mid { color: #555; }
.vbar { width: 1px; height: 16px; background: #c4c6cc; }

/* desktop */
.desktop {
  position: relative;
  flex: 1;
  min-height: 0;
  display: flex;
  padding: 4px 29px 25px 44px;
  background: linear-gradient(90deg, #12b8f4 0%, #12b4f0 30%, #1196de 45%, #0f68c8 70%, #0c45b6 90%, #0b3db0 100%);
}
.shortcuts { position: absolute; left: -20px; top: 8px; width: 76px; display: flex; flex-direction: column; }
.shortcut { height: 85px; text-align: center; color: #fff; line-height: 17px; text-shadow: 0 1px 2px #000, 1px 1px 2px #000; white-space: nowrap; }
.long { text-indent: 10px; }
.pic { position: relative; display: block; width: 32px; height: 34px; margin: 0 auto; }
.pic svg { width: 32px; height: 32px; }
.pic .mark { position: absolute; left: 1px; bottom: 3px; width: 12px; height: 12px; }

/* application window */
.window {
  position: relative;
  flex: 1;
  min-width: 0;
  display: flex;
  flex-direction: column;
  background: #fff;
  border-left: 1px solid #8b93a0;
}
.titlebar { display: grid; grid-template-columns: 1fr auto 1fr; align-items: center; height: 28px; }
.titlebar h1 { color: #000; }
.quick { display: flex; align-items: center; gap: 5px; padding-left: 1px; }
.quick .icon { gap: 3px; padding: 0 1px; }
.winbtns { display: flex; justify-content: flex-end; gap: 35px; padding-right: 18px; color: #8a8a8a; }
.winbtns svg { width: 10px; height: 10px; color: inherit; }
.tabs { display: flex; height: 28px; border-bottom: 1px solid #b6bac2; }
.tab { height: 27px; padding: 0 15px; color: #333; }
.tab.file { width: 55px; padding: 0; color: #fff; background: linear-gradient(#b80f5e, #9a0049 60%, #b52a70); border-radius: 3px 3px 0 0; margin-right: 5px; }
.tab.current { width: 49px; height: 28px; padding: 0; background: #fff; border: 1px solid #b6bac2; border-bottom: 0; border-radius: 3px 3px 0 0; }
.tab:nth-child(n+4) { padding: 0 14px; }
.help { margin-left: auto; display: flex; align-items: center; gap: 8px; padding-right: 3px; }
.chev { width: 10px; height: 8px; }

/* ribbon */
.ribbon { display: flex; height: 103px; background: linear-gradient(#fff 50%, #f1f2f5 85%, #e8eaee); border-bottom: 2px solid #8d939d; }
.group { display: flex; flex-direction: column; border-right: 1px solid #c4c7ce; }
.group h2 { display: flex; justify-content: center; position: relative; height: 19px; color: #666a72; }
.group .more { padding-right: 17px; }
.launch { position: absolute; right: 4px; top: 5px; width: 8px; height: 8px; }
.tools { flex: 1; display: flex; align-items: flex-start; }
.big { display: flex; flex-direction: column; align-items: center; padding-top: 4px; line-height: 20px; flex: none; }
.big svg:first-child { width: 32px; height: 32px; margin-bottom: 4px; }
.big .i8 { margin-top: 2px; }
.stack { display: flex; flex-direction: column; padding-top: 2px; }
.stack.loose { padding-top: 3px; }
.small { display: flex; align-items: center; gap: 3px; height: 22px; color: #1e1e1e; }
.loose .small { height: 25px; }
.small > svg { width: 16px; height: 16px; }
.small > .i8 { width: 8px; height: 8px; }
.big:disabled, .small:disabled { color: #8f8f93; }
.g-view { width: 49px; }
.g-view .tools { justify-content: center; }
.g-clip { width: 113px; }
.g-clip .big { width: 50px; }
.g-sort { width: 199px; }
.g-sort .big { width: 51px; }
.g-sort .stack { width: 74px; }
.g-rec { width: 196px; }
.g-rec .big { width: 62px; }
.g-rec .stack { width: 60px; }
.g-find { width: 111px; }
.g-find .big { width: 51px; }
.g-text { width: 372px; }
.g-cn { width: 84px; }
.g-cn .stack { padding-left: 9px; }
.az { display: flex; align-items: center; width: 16px; font: 9px/9px "Liberation Serif", serif; }
.az svg { width: 6px; height: 16px; }
.az .rub { width: 9px; height: 10px; }
.abac { width: 16px; font: 8px/8px "Liberation Sans", "DejaVu Sans", sans-serif; text-align: left; }
.cn { position: relative; width: 16px; font-size: 13px; line-height: 16px; text-align: right; }
.cn svg { position: absolute; left: -1px; bottom: 0; width: 9px; height: 8px; }
.cn.pair { font-size: 11px; text-align: left; }
.cn em { position: absolute; right: 0; bottom: -3px; font-style: normal; color: #2e62c8; background: #fff; font-size: 10px; line-height: 11px; }

.format { flex: 1; padding: 11px 0 0 6px; }
.line { display: flex; align-items: center; height: 27px; }
.line.second { margin-top: 7px; gap: 7px; padding-left: 3px; }
.combo { position: relative; display: flex; height: 26px; border: 1px solid #dadbdf; background: #f8f8fa; }
.combo select { appearance: none; border: 0; background: none; width: 100%; }
.combo svg { position: absolute; right: 3px; top: 9px; }
.font { width: 159px; }
.size { width: 61px; margin-right: 2px; border-left: 0; }
.fmt { display: flex; align-items: center; gap: 2px; color: #86868a; }
.fmt svg { width: 16px; height: 16px; }
.fmt svg.i8 { width: 8px; height: 8px; }
.line:not(.second) .fmt { margin: 0 3px; }
.line:not(.second) .vbar { margin: 0 5px; }
.letter { font: 15px/18px "Liberation Serif", serif; width: 16px; justify-content: center; }
.letter.wide { width: 24px; font-size: 17px; margin-left: 2px; }
.second .wide { margin-right: 3px; }
.hl { font-size: 10px; gap: 0; }
.hl svg:first-of-type { margin-left: -6px; width: 12px; }

/* work area */
.work { flex: 1; min-height: 0; display: flex; border-top: 2px solid #d8dbe2; background: #d5d8df; }
.pane { width: 214px; border: 1px solid #8b919c; border-width: 1px 1px 1px 3px; background: #fff; box-shadow: inset -4px 0 #f4f5f8; padding-right: 5px; }
.pane-head { display: flex; align-items: center; gap: 10px; height: 24px; padding: 0 5px 0 6px; background: linear-gradient(#fbfbfd, #dfe2ea); border-bottom: 1px solid #c3c7d0; }
.pane-head h2 { flex: 1; font-size: 13px; color: #24468c; }
.pane-search { display: flex; align-items: center; gap: 2px; height: 29px; padding: 2px 3px 3px 2px; background: #f0f2f6; }
.pane-search input { flex: 1; min-width: 0; height: 24px; border: 1px solid #9da2ac; background: #fff; padding: 0 2px 4px; font-style: italic; }
.pane-search input::placeholder { color: #000; opacity: 1; }
.pane h3 { display: flex; justify-content: space-between; align-items: center; height: 20px; padding: 0 10px 0 9px; color: #24468c; border-top: 1px solid #7c818b; border-bottom: 1px solid #c6c9d2; background: linear-gradient(90deg, #cfd4e0, #f0f1f5 60%, #d6d9e2); }
.obj { display: flex; align-items: center; gap: 11px; height: 24px; padding: 0 11px 2px; color: #333; }
.obj svg { width: 16px; height: 14px; }
.obj.hover { background: #edeef2; }
.canvas { position: relative; flex: 1; border-top: 24px solid #adb2bd; background: linear-gradient(#e4e7f0, #d9dce4 50%, #cfd2da); }
.status { display: flex; align-items: center; height: 23px; border-top: 1px solid #8b919c; border-bottom: 1px solid #7d838d; background: linear-gradient(#e9ebef, #ced1d8 50%, #bfc4cc); padding: 0 1px 0 7px; color: #444; }
.status span:first-child { flex: 824; }
.status i { width: 1px; height: 18px; background: #989da7; }
.status .num { flex: 805; text-align: right; padding-right: 10px; }
.status .num + svg { width: 16px; height: 18px; align-self: flex-end; border-left: 1px solid #989da7; padding-left: 3px; }

/* dialog */
.dialog { position: absolute; left: 258px; top: 50px; width: 863px; border: 1px solid #2d6da8; background: #fff; box-shadow: 0 0 6px #b9d3ec; }
.dlg-title { display: flex; align-items: center; gap: 6px; height: 32px; padding: 0 9px 2px; background: #0d7dd4; color: #fff; }
.dlg-title > svg { width: 15px; height: 14px; }
.close { margin-left: auto; }
.close svg { width: 11px; height: 11px; color: #fff; }
.dlg-head { display: flex; align-items: center; gap: 12px; height: 48px; padding: 0 16px 2px; background: #c9d7ee; }
.dlg-head svg { width: 32px; height: 28px; }
.dlg-head h2 { font-size: 24px; line-height: 30px; color: #27497f; }
.dlg-body { display: flex; gap: 18px; padding: 25px 50px 38px 59px; font-size: 13px; line-height: 20px; color: #000; }
.left { width: 304px; }
.lookup { display: flex; height: 26px; margin-bottom: 8px; }
.lookup label { width: 115px; padding-left: 2px; font-weight: 700; font-size: 12px; line-height: 22px; }
.lookup input { width: 114px; border: 1px solid #a3a9b2; }
.go { display: flex; align-items: center; justify-content: center; gap: 6px; padding-bottom: 1px; border: 1px solid #9fadc6; background: linear-gradient(#dfe8f9, #c5d4f0); }
.go svg { width: 12px; height: 10px; }
.lookup .go { width: 76px; margin-left: -1px; }
.listbox { position: relative; display: flex; width: 303px; height: 365px; border: 1px solid #979ca5; padding-right: 1px; }
table { flex: 1; border-collapse: collapse; table-layout: fixed; height: 363px; }
th, td { height: 20px; padding: 0 0 0 3px; line-height: 19px; text-align: left; font-weight: 400; border-right: 1px solid #a8abb0; white-space: nowrap; }
td:first-child, .fields .digits { font-size: 14px; }
th { border-bottom: 1px solid #a8abb0; }
th:nth-child(1) { width: 71px; }
th:nth-child(2) { width: 70px; }
th:last-child, td:last-child { border-right: 0; }
tbody tr:last-child td { height: 23px; vertical-align: top; }
.sel { background: #000; color: #fff; }
.scroll { width: 17px; display: flex; flex-direction: column; align-items: center; background: #f0eff1; color: #444; }
.scroll svg { width: 10px; height: 8px; margin: 5px 0 4px; color: inherit; }
.scroll svg:last-child { margin-top: auto; }
.thumb { width: 15px; height: 17px; background: #cbcacd; }
.mouse { position: absolute; left: 165px; top: 167px; width: 13px; height: 20px; }
.right { flex: 1; display: flex; flex-direction: column; padding-top: 34px; }
.fields { display: grid; grid-template-columns: 74px 118px 85px 152px; row-gap: 3px; }
.fields label { color: #2c4a68; grid-column: 1; }
.fields label.second { grid-column: 3; text-align: right; padding-right: 9px; }
.fields input, .fields textarea, .drop { height: 26px; width: 100%; border: 1px solid #a0a0a4; background: #fff; padding: 0 4px 2px; color: #333; }
.idrow { grid-column: 2 / 5; display: flex; gap: 3px; }
.fields .idrow input { width: 84px; background: #ff0; line-height: 19px; }
.idrow .go { width: 31px; }
.fields input::selection { background: #c00f1a; color: #ffc49a; }
.fields input:focus { outline: 0; }
.drop { display: flex; padding: 0; }
.drop select { flex: 1; min-width: 0; appearance: none; border: 0; background: none; padding: 0 4px 2px; color: #000; }
.drop span { display: flex; align-items: center; justify-content: center; width: 18px; border: 1px solid #a6a6aa; background: #e4e2e6; }
.drop svg { width: 10px; height: 8px; color: #444; }
.drop.dept { grid-column: 2 / 5; width: 200px; }
.fields textarea { grid-column: 2 / 5; height: 42px; resize: none; padding: 1px 4px; display: block; }
.actions { margin-top: auto; display: flex; justify-content: flex-end; gap: 3px; }
.actions button { width: 69px; height: 29px; padding-right: 2px; border: 1px solid #9aaac6; border-radius: 3px; background: linear-gradient(#d9e4f8, #bdcfee); }
.recnav { display: flex; align-items: center; height: 19px; border-top: 1px solid #a0a4ab; background: linear-gradient(#f4f4f6 50%, #e4e4ea 50%); padding-left: 4px; color: #444; }
.recnav svg { width: 8px; height: 8px; }
.recnav label { width: 29px; }
.recnav .icon { width: 17px; justify-content: center; }
.recnav .new svg { width: 14px; height: 10px; }
.recnav input { width: 90px; height: 16px; border: 1px solid #d9dade; padding: 0 1px; color: #000; background: #fff; }
.recnav .filter { display: flex; align-items: center; gap: 3px; height: 18px; padding: 0 8px; margin: 0 5px 0 4px; border: 1px solid #a9adb4; border-width: 0 1px; color: #8f8f93; }
.recnav .filter svg { width: 14px; height: 14px; }
.recnav .find { width: 70px; }

/* taskbar */
.taskbar { display: flex; height: 30px; background: #101114; color: #fff; }
.pins { display: flex; align-items: center; gap: 21px; width: 131px; }
.pins svg { width: 16px; height: 16px; }
.half { width: 5px; height: 14px; border: 2px solid #3a8fc4; border-left: 0; border-radius: 0 3px 3px 0; }
.task { display: flex; align-items: center; gap: 5px; width: 152px; padding: 2px 5px 0; margin-right: 5px; border-bottom: 2px solid #76a9d8; }
.task svg { width: 14px; height: 16px; }
.task.active { width: 160px; padding: 2px 8px 0; background: #333437; }
.tray { margin-left: auto; display: flex; align-items: center; gap: 7px; padding-right: 6px; font-size: 16px; }
.tray svg { height: 16px; color: #fff; }
.up { width: 14px; }
.w18 { width: 18px; }
.w12 { width: 14px; }
```

FILE: script.js
```js
// Put the caret on the record key with its text selected.
document.getElementById("id").select();
```
